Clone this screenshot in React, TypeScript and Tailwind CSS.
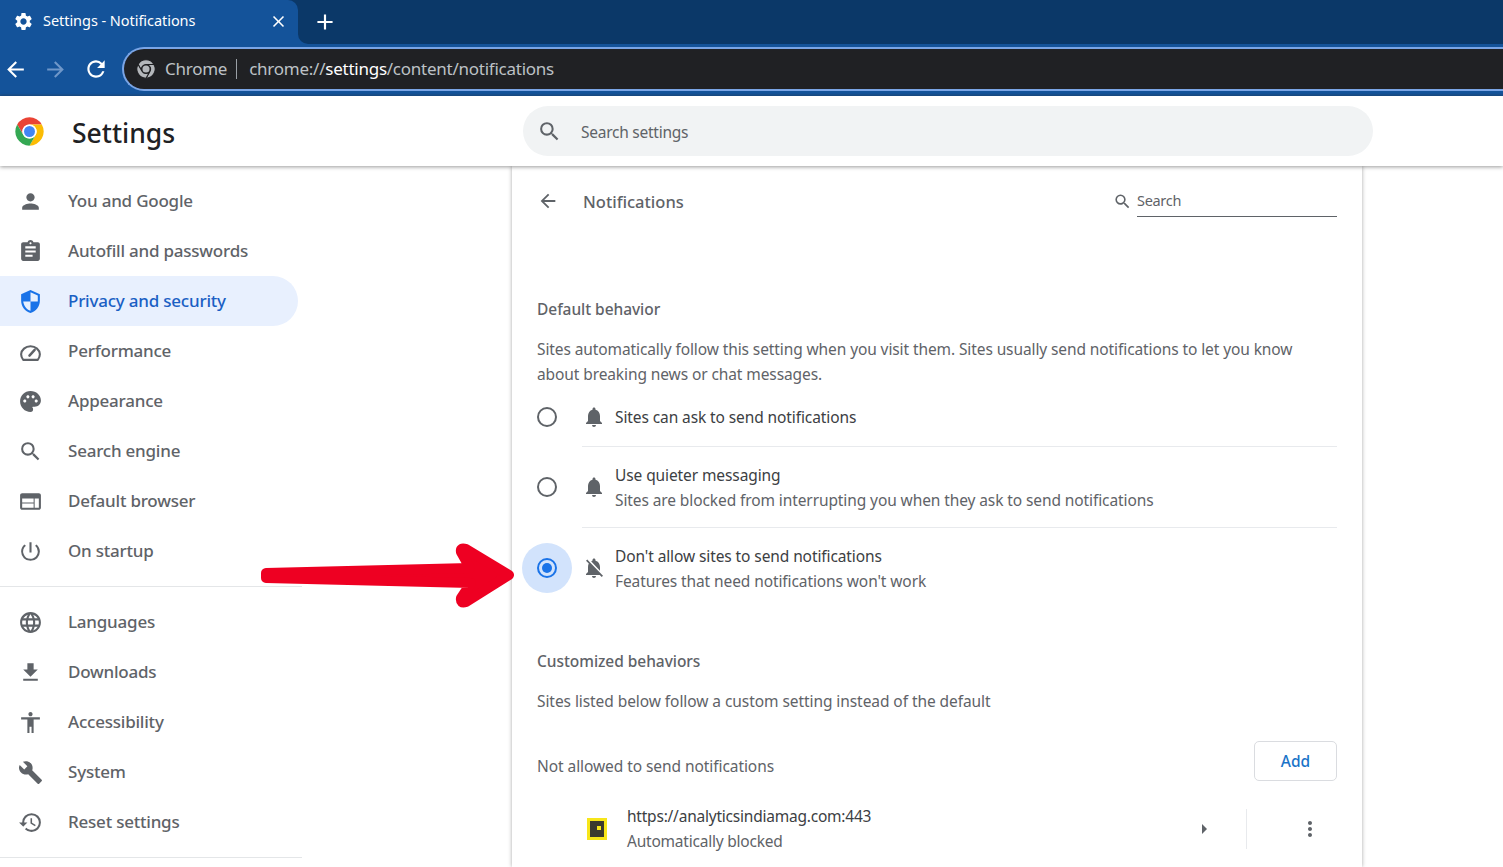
import React from 'react';
import {
  MdAccessibility,
  MdAdd,
  MdArrowBack,
  MdArrowForward,
  MdArrowRight,
  MdAssignment,
  MdBuild,
  MdClose,
  MdFileDownload,
  MdLanguage,
  MdMoreVert,
  MdNotifications,
  MdNotificationsOff,
  MdPalette,
  MdPerson,
  MdPowerSettingsNew,
  MdRefresh,
  MdRestore,
  MdSearch,
  MdSecurity,
  MdSettings,
  MdWeb,
} from 'react-icons/md';

const ChromeLogo = ({ className = '', red, yellow, green, hole, dot, gap }: { className?: string; red: string; yellow: string; green: string; hole: string; dot: string; gap?: string }) => (
  <svg viewBox="0 0 48 48" className={className}>
    <g stroke={gap} strokeWidth={gap ? 2.5 : 0}>
      <path d="M43.05 13A22 22 0 0 0 4.95 13L14.47 29.5A11 11 0 0 1 24 13Z" fill={red} />
      <path d="M43.05 13A22 22 0 0 1 24 46L33.53 29.5A11 11 0 0 0 24 13Z" fill={yellow} />
      <path d="M24 46A22 22 0 0 1 4.95 13L14.47 29.5A11 11 0 0 0 33.53 29.5Z" fill={green} />
    </g>
    <circle cx="24" cy="24" r="11" fill={hole} />
    <circle cx="24" cy="24" r="8.5" fill={dot} />
  </svg>
);

const GaugeIcon = ({ className = '' }: { className?: string }) => (
  <svg viewBox="0 0 24 24" className={className} fill="none" stroke="currentColor">
    <path d="M5 20h14c1.3-1.6 2-3.4 2-5.3A9 8 0 0 0 12 7a9 8 0 0 0-9 7.7c0 1.9.7 3.7 2 5.3Z" strokeWidth="2" strokeLinejoin="round" />
    <path d="M11 16 16 10.5" strokeWidth="2.4" strokeLinecap="round" />
  </svg>
);

const ShieldIcon = ({ className = '' }: { className?: string }) => <MdSecurity className={`-scale-x-100 ${className}`} />;

type NavItem = { label: string; Icon: React.ComponentType<{ className?: string }>; active?: boolean };

const navTop: NavItem[] = [
  { label: 'You and Google', Icon: MdPerson },
  { label: 'Autofill and passwords', Icon: MdAssignment },
  { label: 'Privacy and security', Icon: ShieldIcon, active: true },
  { label: 'Performance', Icon: GaugeIcon },
  { label: 'Appearance', Icon: MdPalette },
  { label: 'Search engine', Icon: MdSearch },
  { label: 'Default browser', Icon: MdWeb },
  { label: 'On startup', Icon: MdPowerSettingsNew },
];

const navBottom: NavItem[] = [
  { label: 'Languages', Icon: MdLanguage },
  { label: 'Downloads', Icon: MdFileDownload },
  { label: 'Accessibility', Icon: MdAccessibility },
  { label: 'System', Icon: MdBuild },
  { label: 'Reset settings', Icon: MdRestore },
];

const NavRow = ({ item }: { item: NavItem }) => (
  <div className={`flex h-[50px] items-center rounded-r-full pl-[18px] ${item.active ? 'bg-[#e8f0fe] text-[#1a5fc4]' : 'text-[#5f6368]'}`}>
    <item.Icon className={`h-[25px] w-[25px] shrink-0 ${item.active ? 'text-[#1a73e8]' : ''}`} />
    <span className="ml-[25px] text-[17px] font-medium tracking-[-0.22px]">{item.label}</span>
  </div>
);

const RadioRow = ({
  checked,
  Icon,
  title,
  sub,
  rowHeight,
}: {
  checked?: boolean;
  Icon: React.ComponentType<{ className?: string }>;
  title: string;
  sub?: string;
  rowHeight: string;
}) => (
  <div className={`flex items-center ${rowHeight}`}>
    <div className={`flex h-[50px] w-[50px] shrink-0 items-center justify-center rounded-full ${checked ? 'bg-[#d2e3fc]' : ''}`}>
      <div className={`flex h-[20px] w-[20px] items-center justify-center rounded-full border-2 ${checked ? 'border-[#1a73e8]' : 'border-[#5f6368]'}`}>
        {checked && <div className="h-[10px] w-[10px] rounded-full bg-[#1a73e8]" />}
      </div>
    </div>
    <Icon className="ml-[10px] h-[24px] w-[24px] shrink-0 text-[#5f6368]" />
    <div className="ml-[9px] pt-[2px] text-[15.5px] leading-[25px] tracking-[-0.1px]">
      <div className="text-[#3c4043]">{title}</div>
      {sub && <div className="text-[#5f6368]">{sub}</div>}
    </div>
  </div>
);

export default function App() {
  return (
    <div className="relative flex h-[867px] w-full flex-col overflow-hidden bg-white font-['Noto_Sans','Open_Sans',sans-serif]">
      {/* tab strip */}
      <div className="flex h-[44px] shrink-0 bg-[linear-gradient(to_bottom,#0b3868_50%,#14539a_50%)]">
        <div className="flex w-[298px] items-center rounded-tr-[10px] bg-[#14539a] pb-[2px] pl-[13px] text-white">
          <MdSettings className="h-[21px] w-[21px] shrink-0" />
          <span className="ml-[9px] text-[14.5px] tracking-[-0.05px]">Settings - Notifications</span>
          <MdClose className="ml-auto mr-[10px] h-[19px] w-[19px]" />
        </div>
        <div className="flex flex-1 items-center rounded-bl-[10px] bg-[#0b3868] pl-[14px] text-white">
          <MdAdd className="h-[26px] w-[26px]" />
        </div>
      </div>

      {/* toolbar */}
      <div className="flex h-[52px] shrink-0 items-start border-b-[2px] border-[#1a5190] bg-[#14539a] pt-[3px]">
        <div className="flex h-[44px] w-[122px] shrink-0 items-center pl-[3px] text-white">
          <MdArrowBack className="h-[25px] w-[25px]" />
          <MdArrowForward className="ml-[15px] h-[25px] w-[25px] text-[#6f97c9]" />
          <MdRefresh className="ml-[15px] h-[26px] w-[26px]" />
        </div>
        <div className="flex h-[44px] flex-1 items-center rounded-l-full border-y-2 border-l-2 border-[#7aa5e6] bg-[#202124] pl-[12px] text-[17px] tracking-[-0.25px] text-[#bdc1c6]">
          <ChromeLogo className="h-[20px] w-[20px]" red="#b4b7bb" yellow="#b4b7bb" green="#b4b7bb" hole="#202124" dot="#b4b7bb" gap="#202124" />
          <span className="ml-[9px]">Chrome</span>
          <span className="ml-[9px] h-[20px] w-px bg-[#9aa0a6]" />
          <span className="ml-[12px]">
            chrome://<span className="text-white">settings</span>/content/notifications
          </span>
        </div>
      </div>

      {/* settings header */}
      <div className="relative z-10 flex h-[70px] shrink-0 items-center bg-white shadow-[0_1px_4px_rgba(0,0,0,0.4)]">
        <div className="flex w-[523px] shrink-0 items-center pl-[14px]">
          <ChromeLogo className="h-[31px] w-[31px]" red="#ea4335" yellow="#fbbc04" green="#34a853" hole="#ffffff" dot="#4285f4" />
          <span className="ml-[27px] pt-[5px] text-[26.5px] font-medium tracking-[0px] text-[#202124]">Settings</span>
        </div>
        <div className="flex h-[50px] w-[850px] items-center rounded-full bg-[#f1f3f4] pl-[14px] text-[#5f6368]">
          <MdSearch className="h-[25px] w-[25px]" />
          <span className="ml-[19px] pt-[4px] text-[15.5px] tracking-[-0.25px]">Search settings</span>
        </div>
      </div>

      {/* body */}
      <div className="flex min-h-0 flex-1">
        <div className="w-[512px] shrink-0 pt-[10px]">
          <div className="w-[298px]">
            {navTop.map(item => (
              <NavRow key={item.label} item={item} />
            ))}
          </div>
          <div className="my-[10px] h-px w-[302px] bg-[#e4e6e8]" />
          <div className="w-[298px]">
            {navBottom.map(item => (
              <NavRow key={item.label} item={item} />
            ))}
          </div>
          <div className="mt-[10px] h-px w-[302px] bg-[#e4e6e8]" />
        </div>

        <div className="w-[850px] shrink-0 bg-white px-[25px] shadow-[0_0_4px_rgba(0,0,0,0.35)]">
          <div className="flex h-[70px] items-center">
            <MdArrowBack className="h-[22px] w-[22px] text-[#5f6368]" />
            <span className="ml-[24px] pt-[2px] text-[16.5px] font-medium tracking-[0px] text-[#5f6368]">Notifications</span>
            <div className="ml-auto flex items-center">
              <MdSearch className="h-[19px] w-[19px] text-[#5f6368]" />
              <div className="ml-[5px] mt-[3px] w-[200px] border-b border-[#5f6368] pb-[4px] text-[14.5px] leading-[24px] tracking-[-0.3px] text-[#5f6368]">Search</div>
            </div>
          </div>

          <div className="mt-[61px] text-[15.5px] font-medium leading-[24px] tracking-[-0.05px] text-[#5f6368]">Default behavior</div>
          <div className="mt-[16px] text-[15.5px] leading-[25px] tracking-[-0.1px] text-[#5f6368]">
            Sites automatically follow this setting when you visit them. Sites usually send notifications to let you know
            <br />
            about breaking news or chat messages.
          </div>

          <div className="-ml-[15px] w-[815px]">
            <RadioRow Icon={MdNotifications} title="Sites can ask to send notifications" rowHeight="h-[59px]" />
            <div className="ml-[60px] h-px bg-[#e8eaed]" />
            <RadioRow Icon={MdNotifications} title="Use quieter messaging" sub="Sites are blocked from interrupting you when they ask to send notifications" rowHeight="h-[80px]" />
            <div className="ml-[60px] h-px bg-[#e8eaed]" />
            <RadioRow checked Icon={MdNotificationsOff} title="Don't allow sites to send notifications" sub="Features that need notifications won't work" rowHeight="h-[80px]" />
          </div>

          <div className="mt-[41px] text-[15.5px] font-medium leading-[24px] tracking-[-0.05px] text-[#5f6368]">Customized behaviors</div>
          <div className="mt-[16px] text-[15.5px] leading-[25px] tracking-[-0.07px] text-[#5f6368]">Sites listed below follow a custom setting instead of the default</div>

          <div className="mt-[27px] flex items-start justify-between">
            <span className="pt-[13px] text-[15.5px] leading-[25px] tracking-[-0.07px] text-[#5f6368]">Not allowed to send notifications</span>
            <div className="flex h-[40px] w-[83px] items-center justify-center rounded-[5px] border border-[#dadce0] pt-[2px] text-[15.5px] font-medium text-[#1a73c8]">Add</div>
          </div>

          <div className="mt-[23px] flex h-[50px] items-center">
            <div className="ml-[50px] flex h-[22px] w-[20px] items-center justify-center bg-[#f7e61a]">
              <div className="flex h-[16px] w-[14px] items-start justify-end bg-[#3b3a2e] pr-[3px] pt-[5px]">
                <div className="h-[4px] w-[4px] bg-[#f7e61a]" />
              </div>
            </div>
            <div className="ml-[20px] text-[15.5px] leading-[25px] tracking-[-0.22px]">
              <div className="text-[#3c4043]">https://analyticsindiamag.com:443</div>
              <div className="text-[#5f6368]">Automatically blocked</div>
            </div>
            <MdArrowRight className="ml-auto h-[24px] w-[24px] text-[#5f6368]" />
            <div className="ml-[30px] h-[40px] w-px bg-[#e8eaed]" />
            <MdMoreVert className="ml-[51px] mr-[15px] h-[24px] w-[24px] text-[#5f6368]" />
          </div>
        </div>
      </div>

      {/* red annotation arrow */}
      <svg className="pointer-events-none absolute left-[255px] top-[538px] h-[76px] w-[266px]" viewBox="255 538 266 76">
        <path
          d="M266 573 470 568 461 552Q460 547 466 549L509 575 466 602Q460 604 461 598L471 583 266 578Z"
          fill="#ee0022"
          stroke="#ee0022"
          strokeWidth="10"
          strokeLinejoin="round"
        />
      </svg>
    </div>
  );
}
